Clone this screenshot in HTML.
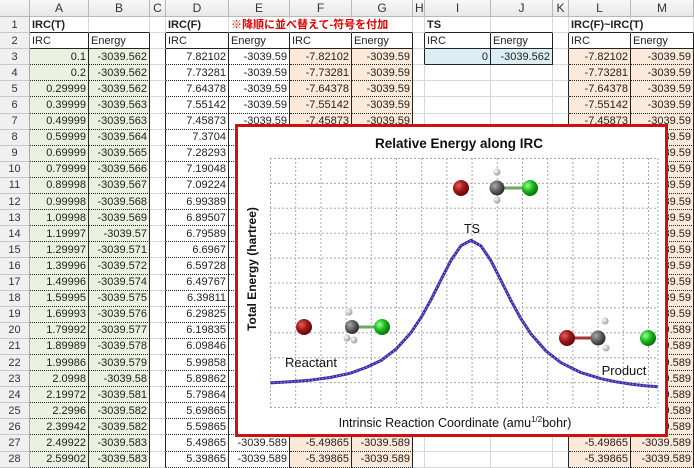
<!DOCTYPE html>
<html><head><meta charset="utf-8"><style>
body{margin:0;width:694px;height:468px;overflow:hidden;background:#fff;font-family:"Liberation Sans","Noto Sans CJK JP",sans-serif;}
table{border-collapse:separate;border-spacing:0;table-layout:fixed;width:694px;position:absolute;left:0;top:0;font-size:11px;color:#222}
td,th{border-right:1px solid #d8d8d8;border-bottom:1px solid #d8d8d8;height:16.1px;padding:0 2px;white-space:nowrap;overflow:visible;box-sizing:border-box;line-height:14px}
thead th{height:17px;background:linear-gradient(#f8f8f8,#e8e8e8);font-weight:normal;color:#333;font-size:12px;border-right:1px solid #b8b8b8;border-bottom:1px solid #b8b8b8}
tbody th{background:#f0f0f0;font-weight:normal;color:#333;border-right:1px solid #aaa;border-bottom:1px solid #c8c8c8;font-size:11px}
tr.r td{text-align:right}
tr.r td:nth-child(2),tr.r td:nth-child(3){background:#ebf1de}
tr.r td:nth-child(7),tr.r td:nth-child(8),tr.r td:nth-child(13),tr.r td:nth-child(14){background:#fde9d9}
tr.r td:nth-child(2),tr.r td:nth-child(3),tr.r td:nth-child(5),tr.r td:nth-child(6),tr.r td:nth-child(7),tr.r td:nth-child(8),tr.r td:nth-child(13),tr.r td:nth-child(14){border-bottom:1px dotted #222;border-right:1px solid #222}
tr.r td:nth-child(4),tr.r td:nth-child(12),tr.h td:nth-child(4),tr.h td:nth-child(12),tr.h td:nth-child(9),tr.t td:nth-child(9){border-right:1px solid #222}
tr.h td{font-size:11px}
tr.h td:nth-child(2),tr.h td:nth-child(3),tr.h td:nth-child(5),tr.h td:nth-child(6),tr.h td:nth-child(7),tr.h td:nth-child(8),tr.h td:nth-child(10),tr.h td:nth-child(11),tr.h td:nth-child(13),tr.h td:nth-child(14){border-bottom:1px solid #222;border-right:1px solid #222}
tr.o td:nth-child(2),tr.o td:nth-child(3),tr.o td:nth-child(5),tr.o td:nth-child(6),tr.o td:nth-child(7),tr.o td:nth-child(8),tr.o td:nth-child(10),tr.o td:nth-child(11),tr.o td:nth-child(13),tr.o td:nth-child(14){border-bottom:1px solid #222}
tr.o td{font-weight:bold;font-size:11px}
tr.t td:nth-child(10),tr.t td:nth-child(11){background:#dbeef3;border-bottom:1px solid #222;border-right:1px solid #222}
.red{color:#e00000;font-size:10px}
</style></head><body>
<table>
<colgroup><col style="width:30px"><col style="width:59px"><col style="width:61px"><col style="width:16px"><col style="width:63px"><col style="width:61px"><col style="width:62px"><col style="width:61px"><col style="width:12px"><col style="width:66px"><col style="width:62px"><col style="width:16px"><col style="width:62px"><col style="width:63px"></colgroup>
<thead><tr><th></th><th>A</th><th>B</th><th>C</th><th>D</th><th>E</th><th>F</th><th>G</th><th>H</th><th>I</th><th>J</th><th>K</th><th>L</th><th>M</th></tr></thead>
<tbody>
<tr class="o"><th>1</th><td>IRC(T)</td><td></td><td></td><td>IRC(F)</td><td class="red">※降順に並べ替えて-符号を付加</td><td></td><td></td><td></td><td>TS</td><td></td><td></td><td>IRC(F)~IRC(T)</td><td></td></tr>
<tr class="h"><th>2</th><td>IRC</td><td>Energy</td><td></td><td>IRC</td><td>Energy</td><td>IRC</td><td>Energy</td><td></td><td>IRC</td><td>Energy</td><td></td><td>IRC</td><td>Energy</td></tr>
<tr class="r t"><th>3</th><td>0.1</td><td>-3039.562</td><td></td><td>7.82102</td><td>-3039.59</td><td>-7.82102</td><td>-3039.59</td><td></td><td>0</td><td>-3039.562</td><td></td><td>-7.82102</td><td>-3039.59</td></tr>
<tr class="r"><th>4</th><td>0.2</td><td>-3039.562</td><td></td><td>7.73281</td><td>-3039.59</td><td>-7.73281</td><td>-3039.59</td><td></td><td></td><td></td><td></td><td>-7.73281</td><td>-3039.59</td></tr>
<tr class="r"><th>5</th><td>0.29999</td><td>-3039.562</td><td></td><td>7.64378</td><td>-3039.59</td><td>-7.64378</td><td>-3039.59</td><td></td><td></td><td></td><td></td><td>-7.64378</td><td>-3039.59</td></tr>
<tr class="r"><th>6</th><td>0.39999</td><td>-3039.563</td><td></td><td>7.55142</td><td>-3039.59</td><td>-7.55142</td><td>-3039.59</td><td></td><td></td><td></td><td></td><td>-7.55142</td><td>-3039.59</td></tr>
<tr class="r"><th>7</th><td>0.49999</td><td>-3039.563</td><td></td><td>7.45873</td><td>-3039.59</td><td>-7.45873</td><td>-3039.59</td><td></td><td></td><td></td><td></td><td>-7.45873</td><td>-3039.59</td></tr>
<tr class="r"><th>8</th><td>0.59999</td><td>-3039.564</td><td></td><td>7.3704</td><td>-3039.59</td><td>-7.3704</td><td>-3039.59</td><td></td><td></td><td></td><td></td><td>-7.3704</td><td>-3039.59</td></tr>
<tr class="r"><th>9</th><td>0.69999</td><td>-3039.565</td><td></td><td>7.28293</td><td>-3039.59</td><td>-7.28293</td><td>-3039.59</td><td></td><td></td><td></td><td></td><td>-7.28293</td><td>-3039.59</td></tr>
<tr class="r"><th>10</th><td>0.79999</td><td>-3039.566</td><td></td><td>7.19048</td><td>-3039.59</td><td>-7.19048</td><td>-3039.59</td><td></td><td></td><td></td><td></td><td>-7.19048</td><td>-3039.59</td></tr>
<tr class="r"><th>11</th><td>0.89998</td><td>-3039.567</td><td></td><td>7.09224</td><td>-3039.59</td><td>-7.09224</td><td>-3039.59</td><td></td><td></td><td></td><td></td><td>-7.09224</td><td>-3039.59</td></tr>
<tr class="r"><th>12</th><td>0.99998</td><td>-3039.568</td><td></td><td>6.99389</td><td>-3039.59</td><td>-6.99389</td><td>-3039.59</td><td></td><td></td><td></td><td></td><td>-6.99389</td><td>-3039.59</td></tr>
<tr class="r"><th>13</th><td>1.09998</td><td>-3039.569</td><td></td><td>6.89507</td><td>-3039.59</td><td>-6.89507</td><td>-3039.59</td><td></td><td></td><td></td><td></td><td>-6.89507</td><td>-3039.59</td></tr>
<tr class="r"><th>14</th><td>1.19997</td><td>-3039.57</td><td></td><td>6.79589</td><td>-3039.59</td><td>-6.79589</td><td>-3039.59</td><td></td><td></td><td></td><td></td><td>-6.79589</td><td>-3039.59</td></tr>
<tr class="r"><th>15</th><td>1.29997</td><td>-3039.571</td><td></td><td>6.6967</td><td>-3039.59</td><td>-6.6967</td><td>-3039.59</td><td></td><td></td><td></td><td></td><td>-6.6967</td><td>-3039.59</td></tr>
<tr class="r"><th>16</th><td>1.39996</td><td>-3039.572</td><td></td><td>6.59728</td><td>-3039.59</td><td>-6.59728</td><td>-3039.59</td><td></td><td></td><td></td><td></td><td>-6.59728</td><td>-3039.59</td></tr>
<tr class="r"><th>17</th><td>1.49996</td><td>-3039.574</td><td></td><td>6.49767</td><td>-3039.59</td><td>-6.49767</td><td>-3039.59</td><td></td><td></td><td></td><td></td><td>-6.49767</td><td>-3039.59</td></tr>
<tr class="r"><th>18</th><td>1.59995</td><td>-3039.575</td><td></td><td>6.39811</td><td>-3039.59</td><td>-6.39811</td><td>-3039.59</td><td></td><td></td><td></td><td></td><td>-6.39811</td><td>-3039.59</td></tr>
<tr class="r"><th>19</th><td>1.69993</td><td>-3039.576</td><td></td><td>6.29825</td><td>-3039.59</td><td>-6.29825</td><td>-3039.59</td><td></td><td></td><td></td><td></td><td>-6.29825</td><td>-3039.59</td></tr>
<tr class="r"><th>20</th><td>1.79992</td><td>-3039.577</td><td></td><td>6.19835</td><td>-3039.59</td><td>-6.19835</td><td>-3039.59</td><td></td><td></td><td></td><td></td><td>-6.19835</td><td>-3039.589</td></tr>
<tr class="r"><th>21</th><td>1.89989</td><td>-3039.578</td><td></td><td>6.09846</td><td>-3039.589</td><td>-6.09846</td><td>-3039.589</td><td></td><td></td><td></td><td></td><td>-6.09846</td><td>-3039.589</td></tr>
<tr class="r"><th>22</th><td>1.99986</td><td>-3039.579</td><td></td><td>5.99858</td><td>-3039.589</td><td>-5.99858</td><td>-3039.589</td><td></td><td></td><td></td><td></td><td>-5.99858</td><td>-3039.589</td></tr>
<tr class="r"><th>23</th><td>2.0998</td><td>-3039.58</td><td></td><td>5.89862</td><td>-3039.589</td><td>-5.89862</td><td>-3039.589</td><td></td><td></td><td></td><td></td><td>-5.89862</td><td>-3039.589</td></tr>
<tr class="r"><th>24</th><td>2.19972</td><td>-3039.581</td><td></td><td>5.79864</td><td>-3039.589</td><td>-5.79864</td><td>-3039.589</td><td></td><td></td><td></td><td></td><td>-5.79864</td><td>-3039.589</td></tr>
<tr class="r"><th>25</th><td>2.2996</td><td>-3039.582</td><td></td><td>5.69865</td><td>-3039.589</td><td>-5.69865</td><td>-3039.589</td><td></td><td></td><td></td><td></td><td>-5.69865</td><td>-3039.589</td></tr>
<tr class="r"><th>26</th><td>2.39942</td><td>-3039.582</td><td></td><td>5.59865</td><td>-3039.589</td><td>-5.59865</td><td>-3039.589</td><td></td><td></td><td></td><td></td><td>-5.59865</td><td>-3039.589</td></tr>
<tr class="r"><th>27</th><td>2.49922</td><td>-3039.583</td><td></td><td>5.49865</td><td>-3039.589</td><td>-5.49865</td><td>-3039.589</td><td></td><td></td><td></td><td></td><td>-5.49865</td><td>-3039.589</td></tr>
<tr class="r"><th>28</th><td>2.59902</td><td>-3039.583</td><td></td><td>5.39865</td><td>-3039.589</td><td>-5.39865</td><td>-3039.589</td><td></td><td></td><td></td><td></td><td>-5.39865</td><td>-3039.589</td></tr>
</tbody></table>

<svg width="694" height="468" style="position:absolute;left:0;top:0" font-family="Liberation Sans, sans-serif">
<defs>
<radialGradient id="br" cx="0.35" cy="0.35" r="0.7"><stop offset="0" stop-color="#e06060"/><stop offset="0.5" stop-color="#a01818"/><stop offset="1" stop-color="#5a0808"/></radialGradient>
<radialGradient id="c" cx="0.35" cy="0.35" r="0.7"><stop offset="0" stop-color="#aaa"/><stop offset="0.6" stop-color="#555"/><stop offset="1" stop-color="#2a2a2a"/></radialGradient>
<radialGradient id="h" cx="0.35" cy="0.35" r="0.7"><stop offset="0" stop-color="#fff"/><stop offset="1" stop-color="#999"/></radialGradient>
<radialGradient id="cl" cx="0.35" cy="0.35" r="0.7"><stop offset="0" stop-color="#9f9"/><stop offset="0.5" stop-color="#1bb81b"/><stop offset="1" stop-color="#066a06"/></radialGradient>
</defs>
<rect x="236.5" y="125.5" width="430" height="310" fill="#fff" stroke="#d01010" stroke-width="3"/>
<g stroke="#a8a8a8" stroke-width="1" stroke-dasharray="2,2" fill="none">
<path d="M270.5 158V407M295.7 158V407M320.9 158V407M346.1 158V407M371.3 158V407M396.5 158V407M421.7 158V407M446.9 158V407M472.1 158V407M497.3 158V407M522.5 158V407M547.7 158V407M572.9 158V407M598.1 158V407M623.3 158V407M648.5 158V407M658 158V407"/>
<path d="M270 158.5H658M270 183.4H658M270 208.3H658M270 233.2H658M270 258.1H658M270 283H658M270 307.9H658M270 332.8H658M270 357.7H658M270 382.6H658M270 407.5H658"/>
</g>
<polyline fill="none" stroke="#3b2fa8" stroke-width="3" stroke-linejoin="round" points="270,382.9 290,381.8 310,380.2 330,377.5 350,373.3 366,367.5 381,360.5 396,349.2 411,332.6 421,317.6 431,299.7 441,279.7 451,260.3 461,245.7 471,240.3 481,245.9 491,260.8 501,280.5 511,300.7 521,318.8 531,334 546,351 561,362.7 581,372.6 601,378.7 616,381.8 631,384.1 645,385.8 658,386.8"/>
<polyline fill="none" stroke="#c8c0ff" stroke-width="1" stroke-dasharray="1,2.5" points="270,382.9 290,381.8 310,380.2 330,377.5 350,373.3 366,367.5 381,360.5 396,349.2 411,332.6 421,317.6 431,299.7 441,279.7 451,260.3 461,245.7 471,240.3 481,245.9 491,260.8 501,280.5 511,300.7 521,318.8 531,334 546,351 561,362.7 581,372.6 601,378.7 616,381.8 631,384.1 645,385.8 658,386.8"/>
<text x="459" y="148" text-anchor="middle" font-size="13.5" font-weight="bold" fill="#111">Relative Energy along IRC</text>
<text x="472" y="233" text-anchor="middle" font-size="12.5" fill="#111">TS</text>
<text x="311" y="367" text-anchor="middle" font-size="13" fill="#111">Reactant</text>
<text x="624" y="375" text-anchor="middle" font-size="13" fill="#111">Product</text>
<text transform="translate(256,269) rotate(-90)" text-anchor="middle" font-size="12" font-weight="bold" fill="#111">Total Energy (hartree)</text>
<text x="455" y="427" text-anchor="middle" font-size="12.5" fill="#111">Intrinsic Reaction Coordinate (amu<tspan font-size="8" dy="-5">1/2</tspan><tspan dy="5">bohr)</tspan></text>
<circle cx="304" cy="327" r="8" fill="url(#br)"/>
<line x1="353" y1="327" x2="382" y2="327" stroke="#6a6" stroke-width="3"/>
<circle cx="349" cy="312" r="3.5" fill="url(#h)"/>
<circle cx="352" cy="327" r="7" fill="url(#c)"/>
<circle cx="347" cy="338" r="3.5" fill="url(#h)"/>
<circle cx="354" cy="340" r="3.5" fill="url(#h)"/>
<circle cx="382" cy="327" r="8" fill="url(#cl)"/>
<circle cx="461" cy="188" r="8" fill="url(#br)"/>
<line x1="497" y1="188" x2="530" y2="188" stroke="#6a6" stroke-width="3"/>
<circle cx="497" cy="172" r="3.5" fill="url(#h)"/>
<circle cx="497" cy="200" r="3.5" fill="url(#h)"/>
<circle cx="497" cy="188" r="7.5" fill="url(#c)"/>
<circle cx="530" cy="188" r="8" fill="url(#cl)"/>
<line x1="567" y1="338" x2="598" y2="338" stroke="#a33" stroke-width="3"/>
<circle cx="567" cy="338" r="8" fill="url(#br)"/>
<circle cx="605" cy="321" r="3.5" fill="url(#h)"/>
<circle cx="598" cy="338" r="7.5" fill="url(#c)"/>
<circle cx="606" cy="348" r="3.5" fill="url(#h)"/>
<circle cx="648" cy="338" r="8" fill="url(#cl)"/>
</svg>
</body></html>
